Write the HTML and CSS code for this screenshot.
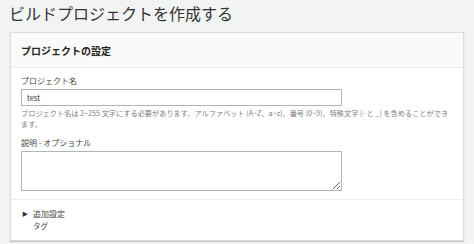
FILE: index.html
```html
<!DOCTYPE html>
<html lang="ja">
<head>
<meta charset="utf-8">
<link rel="stylesheet" href="styles.css">
</head>
<body>
<h1 class="page-title">ビルドプロジェクトを作成する</h1>
<section class="card">
  <header class="card-header">プロジェクトの設定</header>
  <div class="card-body">
    <div class="field">
      <label class="label">プロジェクト名</label>
      <input class="input" type="text" value="test">
      <p class="help">プロジェクト名は 2~255 文字にする必要があります。アルファベット (A~Z、a~z)、番号 (0~9)、特殊文字 (- と _) を含めることができます。</p>
    </div>
    <div class="field">
      <label class="label">説明 - オプショナル</label>
      <textarea class="textarea"></textarea>
    </div>
  </div>
  <div class="card-footer">
    <div class="expander"><span class="caret">▶</span><span class="exp-title">追加設定</span></div>
    <div class="exp-sub">タグ</div>
  </div>
</section>
</body>
</html>
```
FILE: styles.css
```css
html, body {
  margin: 0;
  padding: 0;
}
body {
  background: #f2f3f3;
  font-family: "Noto Sans CJK JP", "Noto Sans", sans-serif;
  color: #444;
  width: 474px;
  height: 244px;
  overflow: hidden;
}
.page-title {
  margin: 0;
  padding: 1px 0 0 9px;
  height: 32px;
  box-sizing: border-box;
  font-size: 16px;
  line-height: 24px;
  font-weight: 400;
  color: #333;
}
.card {
  margin: 0 10px;
  background: #fff;
  border: 1px solid #d9dddd;
  box-shadow: 0 1px 1px rgba(0,0,0,0.18);
}
.card-header {
  height: 34px;
  background: #fafafa;
  border-bottom: 1px solid #eaeded;
  padding-left: 10px;
  font-size: 10px;
  font-weight: 700;
  line-height: 35px;
  color: #222;
}
.card-body {
  padding: 7px 10px 8px;
  border-bottom: 1px solid #eaeded;
}
.field {
  display: flex;
  flex-direction: column;
}
.label {
  font-size: 8px;
  line-height: 12px;
  height: 12px;
  margin-bottom: 2px;
  color: #444;
}
.input {
  width: 321px;
  height: 17px;
  box-sizing: border-box;
  border: 1px solid #aab7b8;
  padding: 0 5px;
  font-family: inherit;
  font-size: 7.5px;
  color: #333;
  margin: 0;
  outline: none;
}
.help {
  margin: 2px 0 0;
  font-size: 7.2px;
  line-height: 11px;
  color: #7a7f80;
  margin-bottom: 7px;
}
.textarea {
  width: 321px;
  height: 40px;
  box-sizing: border-box;
  border: 1px solid #aab7b8;
  margin: 0;
  padding: 3px 5px;
  outline: none;
  font-family: inherit;
}
.card-footer {
  padding: 8px 10px 8px 11px;
}
.expander {
  display: flex;
  align-items: center;
  gap: 5px;
  font-size: 8px;
  line-height: 12px;
  color: #444;
}
.caret {
  font-size: 6px;
  color: #333;
}
.exp-sub {
  font-size: 7.5px;
  line-height: 12px;
  padding-left: 11px;
  color: #444;
}
```
